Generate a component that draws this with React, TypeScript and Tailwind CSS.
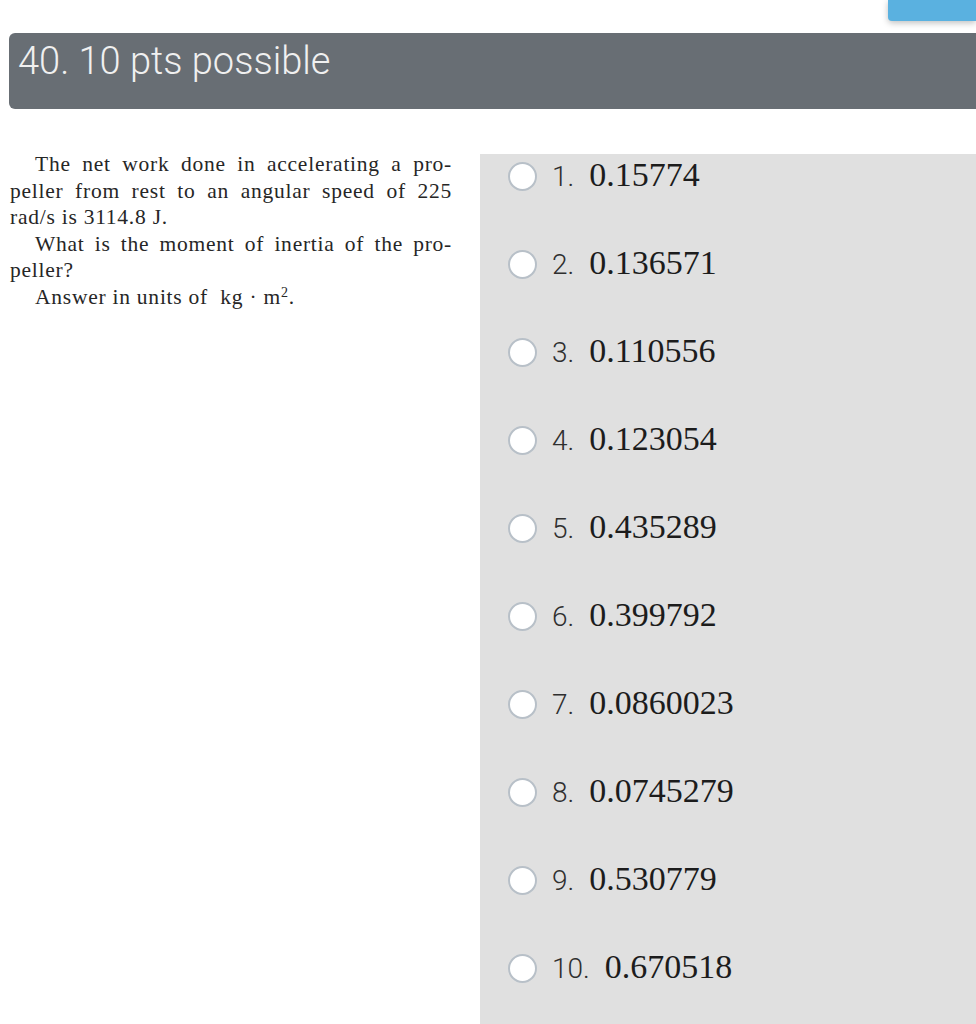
import React from "react";

const options = [
  "0.15774",
  "0.136571",
  "0.110556",
  "0.123054",
  "0.435289",
  "0.399792",
  "0.0860023",
  "0.0745279",
  "0.530779",
  "0.670518",
];

const serif = { fontFamily: '"Liberation Serif", "DejaVu Serif", serif' };

function Line({ children, indent, last }: { children: React.ReactNode; indent?: boolean; last?: boolean }) {
  return (
    <div
      className={`${indent ? "pl-[25px]" : ""} ${last ? "text-left" : "text-justify [text-align-last:justify]"}`}
    >
      {children}
    </div>
  );
}

export default function App() {
  return (
    <div className="relative w-[976px] h-[1024px] overflow-hidden bg-white">
      <div className="absolute right-0 top-0 w-[88px] h-[21px] bg-[#5ab1e0] rounded-bl-[4px] shadow-[0_2px_6px_rgba(0,0,0,0.25)]" />
      <div className="pt-[33px] pl-[9px]">
        <div
          className="h-[76px] bg-[#686e74] rounded-l-[6px] pl-[9px] pt-[3px] text-[#f0f0f0] text-[38px] font-light leading-[50px]"
          style={{ fontFamily: 'Roboto, "Liberation Sans", sans-serif' }}
        >
          40. 10 pts possible
        </div>
      </div>
      <div className="flex mt-[45px]">
        <div className="w-[480px] pl-[10px] pr-[28px] text-[21.5px] leading-[26.5px] tracking-[0.035em] text-[#262626]" style={serif}>
          <div className="-mt-[3px]">
            <Line indent>The net work done in accelerating a pro-</Line>
            <Line>peller from rest to an angular speed of 225</Line>
            <Line last>rad/s is 3114.8 J.</Line>
            <Line indent>What is the moment of inertia of the pro-</Line>
            <Line last>peller?</Line>
            <Line indent last>
              Answer in units of&nbsp; kg · m<sup className="text-[14px]">2</sup>.
            </Line>
          </div>
        </div>
        <div className="flex-1 bg-[#e0e0e0] h-[870px] flex flex-col gap-[44px]">
          {options.map((v, i) => (
            <div key={i} className="h-[44px] flex items-center pl-[508px] -ml-[480px]">
              <div className="w-[29px] h-[29px] rounded-full bg-white border-2 border-[#b8c0c8] shrink-0" />
              <div className="flex items-baseline -mt-[4px]">
                <span
                  className="ml-[15px] text-[28px] text-[#2f2f2f] font-light"
                  style={{ fontFamily: 'Roboto, "Liberation Sans", sans-serif' }}
                >
                  {i + 1}.
                </span>
                <span className="ml-[15px] text-[34px] text-[#1c1c1c]" style={serif}>
                  {v}
                </span>
              </div>
            </div>
          ))}
        </div>
      </div>
    </div>
  );
}
